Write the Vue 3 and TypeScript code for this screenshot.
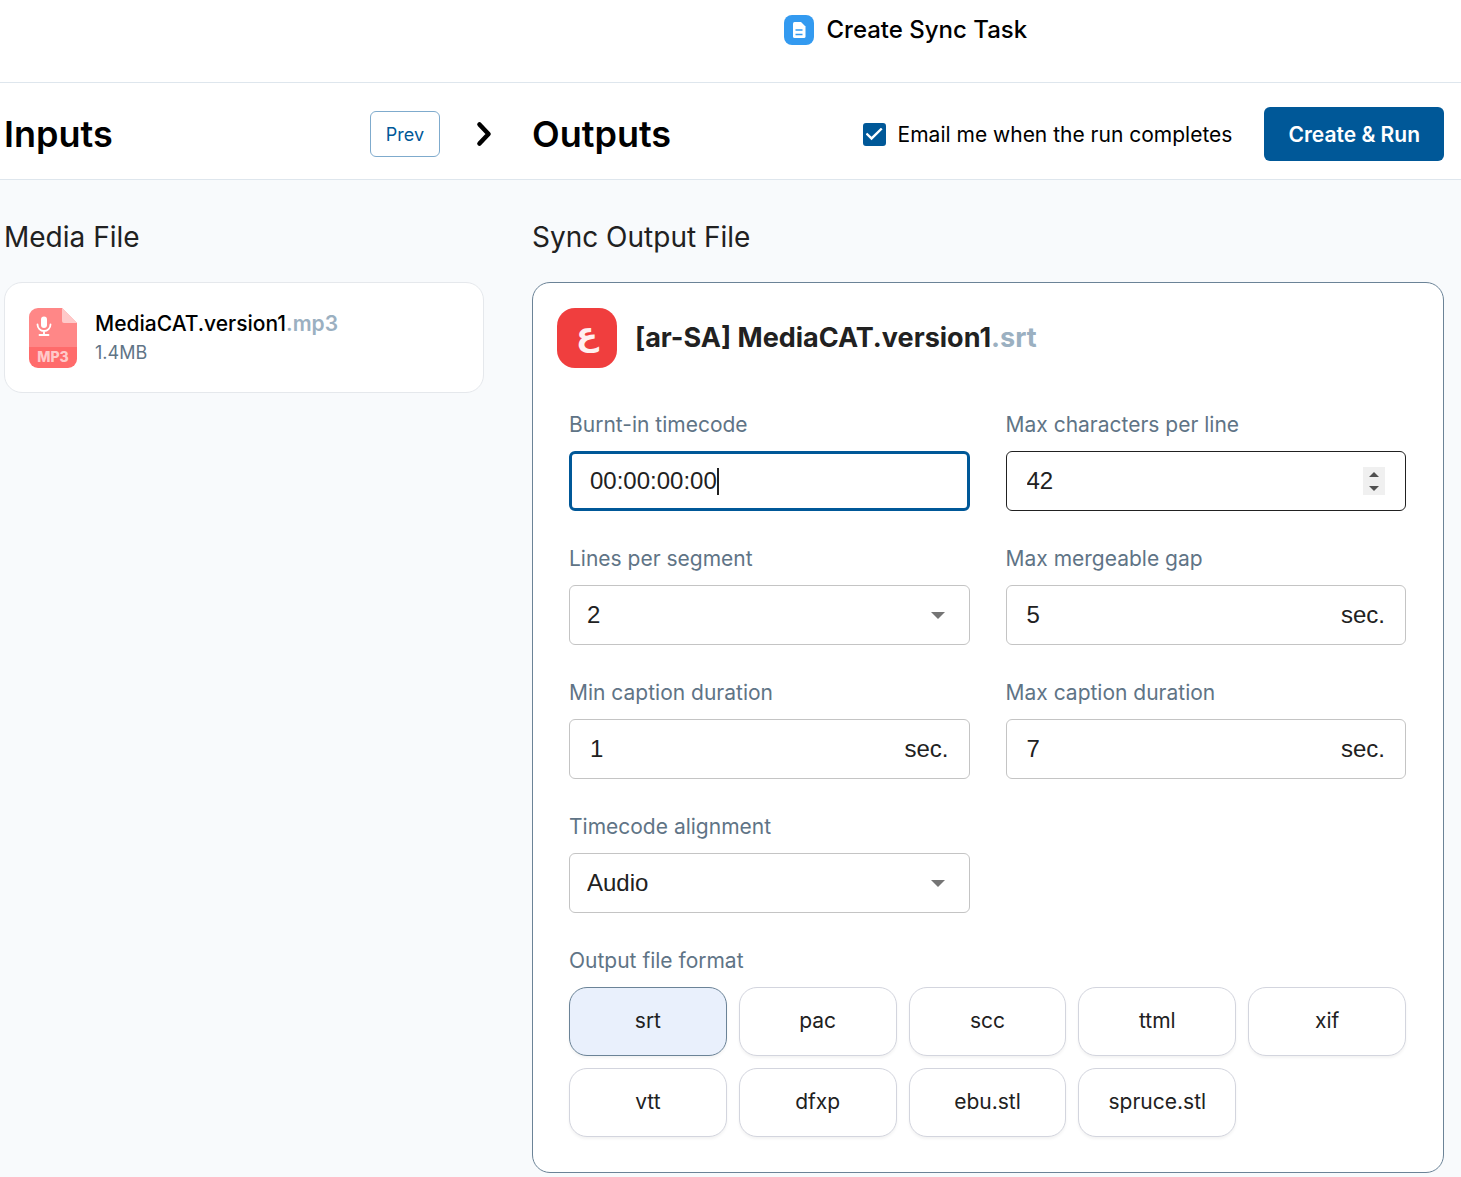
<script setup lang="ts">
import { computed, reactive, ref } from 'vue'

interface Settings {
  timecode: string
  maxChars: number
  lines: string
  mergeGap: number
  minDuration: number
  maxDuration: number
  alignment: string
}

const settings = reactive<Settings>({
  timecode: '00:00:00:00',
  maxChars: 42,
  lines: '2',
  mergeGap: 5,
  minDuration: 1,
  maxDuration: 7,
  alignment: 'Audio',
})

const emailMe = ref<boolean>(true)
const formats: string[] = ['srt', 'pac', 'scc', 'ttml', 'xif', 'vtt', 'dfxp', 'ebu.stl', 'spruce.stl']
const format = ref<string>('srt')
const outputExt = computed<string>(() => '.' + format.value)
</script>

<template>
  <div class="page">
    <header class="titlebar">
      <svg class="title-icon" viewBox="0 0 30 30" aria-hidden="true">
        <rect width="30" height="30" rx="8" fill="#339af0" />
        <path d="M10.500 7H17l4.500 4.500V21.500a1.500 1.500 0 0 1-1.500 1.500h-9.500A1.500 1.500 0 0 1 9 21.500v-13A1.500 1.500 0 0 1 10.500 7z" fill="#fff" />
        <path d="M11.500 15h7M11.500 19.500h7" stroke="#339af0" stroke-width="1.500" />
      </svg>
      <h1>Create Sync Task</h1>
    </header>

    <div class="toolbar columns">
      <div class="bar">
        <h2>Inputs</h2>
        <button type="button" class="prev">Prev</button>
      </div>
      <svg class="chevron" viewBox="0 0 16 26" aria-hidden="true">
        <path d="M3.500 3.500l9 9.500-9 9.500" fill="none" stroke="#000" stroke-width="4.600" stroke-linecap="round" stroke-linejoin="round" />
      </svg>
      <div class="bar">
        <h2>Outputs</h2>
        <div class="actions">
          <label class="email">
            <input v-model="emailMe" type="checkbox" />
            <span>Email me when the run completes</span>
          </label>
          <button type="button" class="run">Create &amp; Run</button>
        </div>
      </div>
    </div>

    <main class="columns body">
      <section>
        <h3>Media File</h3>
        <div class="media card">
          <svg class="file-icon" viewBox="0 0 48 60" aria-hidden="true">
            <path d="M9 0h24l15 15v24H0V9a9 9 0 0 1 9-9z" fill="#ff8787" />
            <path d="M33 0l15 15H35a2 2 0 0 1-2-2z" fill="#ffc9c9" />
            <path d="M0 39h48v12a9 9 0 0 1-9 9H9a9 9 0 0 1-9-9z" fill="#ff6b6b" />
            <rect x="12" y="8.500" width="6" height="11.500" rx="3" fill="#fff" />
            <path d="M8.500 16.500a6.500 6.500 0 0 0 13 0M15 23v4M10.500 27h9" fill="none" stroke="#fff" stroke-width="1.800" stroke-linecap="round" />
            <text x="24" y="54" text-anchor="middle" font-size="14" font-weight="800" fill="#ffc9c9">MP3</text>
          </svg>
          <div>
            <p class="media-name">MediaCAT.version1<span class="ext">.mp3</span></p>
            <p class="media-size">1.4MB</p>
          </div>
        </div>
      </section>

      <section class="outputs">
        <h3>Sync Output File</h3>
        <form class="output card" @submit.prevent>
          <div class="output-head">
            <span class="lang" lang="ar">ع</span>
            <h4>[ar-SA] MediaCAT.version1<span class="ext">{{ outputExt }}</span></h4>
          </div>

          <div class="fields">
            <div class="field">
              <label for="timecode">Burnt-in timecode</label>
              <div class="control focused">
                <input id="timecode" v-model="settings.timecode" class="timecode" type="text" />
                <span class="caret"></span>
              </div>
            </div>
            <div class="field">
              <label for="max-chars">Max characters per line</label>
              <div class="control hovered">
                <input id="max-chars" v-model="settings.maxChars" type="number" />
                <span class="stepper">
                  <button type="button" aria-label="Increase" @click="settings.maxChars++">
                    <svg viewBox="0 0 10 5"><path d="M0 5l5-5 5 5z" /></svg>
                  </button>
                  <button type="button" aria-label="Decrease" @click="settings.maxChars--">
                    <svg viewBox="0 0 10 5"><path d="M0 0h10L5 5z" /></svg>
                  </button>
                </span>
              </div>
            </div>
            <div class="field">
              <label for="lines">Lines per segment</label>
              <div class="control select">
                <select id="lines" v-model="settings.lines">
                  <option>1</option>
                  <option>2</option>
                  <option>3</option>
                </select>
                <svg class="arrow" viewBox="0 0 14 7" aria-hidden="true"><path d="M0 0h14L7 7z" /></svg>
              </div>
            </div>
            <div class="field">
              <label for="gap">Max mergeable gap</label>
              <div class="control">
                <input id="gap" v-model="settings.mergeGap" type="number" />
                <span>sec.</span>
              </div>
            </div>
            <div class="field">
              <label for="min-duration">Min caption duration</label>
              <div class="control">
                <input id="min-duration" v-model="settings.minDuration" type="number" />
                <span>sec.</span>
              </div>
            </div>
            <div class="field">
              <label for="max-duration">Max caption duration</label>
              <div class="control">
                <input id="max-duration" v-model="settings.maxDuration" type="number" />
                <span>sec.</span>
              </div>
            </div>
            <div class="field">
              <label for="alignment">Timecode alignment</label>
              <div class="control select">
                <select id="alignment" v-model="settings.alignment">
                  <option>Audio</option>
                  <option>Shot</option>
                </select>
                <svg class="arrow" viewBox="0 0 14 7" aria-hidden="true"><path d="M0 0h14L7 7z" /></svg>
              </div>
            </div>
            <div class="field wide" role="group" aria-labelledby="format-label">
              <span id="format-label" class="label">Output file format</span>
              <div class="formats">
                <button
                  v-for="item in formats"
                  :key="item"
                  type="button"
                  :class="{ active: item === format }"
                  :aria-pressed="item === format"
                  @click="format = item"
                >{{ item }}</button>
              </div>
            </div>
          </div>
        </form>
      </section>
    </main>
  </div>
</template>

<style>
body {
  margin: 0;
  background: #f8fafc;
}
</style>

<style scoped>
.page {
  min-height: 100vh;
  color: #212121;
  font-family: Inter, "Liberation Sans", sans-serif;
}

.page,
.page *,
.page *::before {
  box-sizing: border-box;
}

h1, h2, h3, h4, p {
  margin: 0;
}

button, input, select {
  font: inherit;
  color: inherit;
}

button {
  cursor: pointer;
}

.titlebar {
  display: flex;
  align-items: center;
  justify-content: center;
  gap: 12px;
  padding: 12px 0 34px 24%;
  background: #fff;
  border-bottom: 1px solid #dee6ed;
}

.title-icon {
  width: 30px;
  height: 30px;
}

h1 {
  color: #000;
  font-size: 24px;
  font-weight: 500;
  line-height: 36px;
}

.columns {
  display: grid;
  grid-template-columns: minmax(0, 10fr) minmax(0, 19fr);
  column-gap: 48px;
  padding: 0 17px 0 4px;
}

.toolbar {
  grid-template-columns: minmax(0, 10fr) 0 minmax(0, 19fr);
  column-gap: 24px;
  align-items: center;
  padding-top: 24px;
  padding-bottom: 18px;
  background: #fff;
  border-bottom: 1px solid #dee6ed;
}

.bar,
.actions,
.email {
  display: flex;
  align-items: center;
}

.bar {
  justify-content: space-between;
}

h2 {
  color: #000;
  font-size: 36px;
  font-weight: 600;
  line-height: 54px;
}

.prev {
  height: 46px;
  margin-right: 44px;
  padding: 0 15px;
  border: 1px solid #7fabcd;
  border-radius: 6px;
  background: #fff;
  color: #005898;
  font-size: 18px;
}

.chevron {
  width: 16px;
  height: 26px;
  justify-self: end;
  margin-right: 16px;
}

.actions {
  gap: 32px;
}

.email {
  gap: 12px;
  color: #000;
  font-size: 21px;
}

.email input {
  display: grid;
  place-items: center;
  width: 23px;
  height: 23px;
  margin: 0;
  appearance: none;
  border: 2px solid #005898;
  border-radius: 3px;
}

.email input:checked {
  background: #005898;
}

.email input:checked::before {
  content: "";
  width: 17px;
  height: 13px;
  background: #fff;
  clip-path: polygon(0 52%, 10% 40%, 35% 72%, 90% 2%, 100% 14%, 35% 98%);
}

.run {
  height: 54px;
  padding: 0 24px;
  border: 0;
  border-radius: 6px;
  background: #005898;
  color: #fff;
  font-size: 21px;
  font-weight: 600;
}

.body {
  padding-top: 36px;
  padding-bottom: 4px;
}

h3 {
  margin-bottom: 24px;
  font-size: 28px;
  font-weight: 400;
  line-height: 42px;
}

.card {
  border: 1px solid #e5e8ec;
  border-radius: 18px;
  background: #fff;
}

.media {
  display: flex;
  align-items: center;
  gap: 18px;
  padding: 25px 24px 24px;
}

.file-icon {
  flex: none;
  width: 48px;
  height: 60px;
}

.media-name {
  color: #000;
  font-size: 21px;
  font-weight: 500;
  line-height: 30px;
}

.ext {
  color: #9bb0c1;
}

.media-name .ext {
  font-weight: 600;
}

.media-size {
  color: #5f7486;
  font-size: 18px;
  line-height: 28px;
}

.output {
  padding: 25px 24px 35px;
  border-color: #6b8397;
}

.output-head {
  display: flex;
  align-items: center;
  gap: 18px;
}

.lang {
  display: grid;
  flex: none;
  place-items: center;
  width: 60px;
  height: 60px;
  padding-bottom: 8px;
  border-radius: 18px;
  background: #f03e3e;
  color: #fff0f0;
  font-family: "DejaVu Sans", sans-serif;
  font-size: 32px;
  font-weight: 700;
  line-height: 36px;
}

h4 {
  font-size: 27px;
  font-weight: 700;
  line-height: 40px;
}

.fields {
  display: grid;
  grid-template-columns: repeat(2, minmax(0, 1fr));
  gap: 32px 36px;
  padding: 41px 13px 0 12px;
}

.field {
  display: flex;
  flex-direction: column;
  gap: 10px;
}

.wide {
  grid-column: 1 / -1;
}

.field label,
.label {
  color: #5f7486;
  font-size: 21px;
  line-height: 32px;
}

.control {
  display: flex;
  align-items: center;
  height: 60px;
  padding: 0 20px;
  border: 1px solid #c4c4c4;
  border-radius: 6px;
  background: #fff;
  font-family: "Liberation Sans", Arial, sans-serif;
  font-size: 24px;
}

.control input {
  flex: 1;
  min-width: 0;
  padding: 0;
  border: 0;
  outline: 0;
  background: none;
  appearance: textfield;
}

.control input::-webkit-inner-spin-button {
  appearance: none;
}

.control.focused {
  padding: 0 18px;
  border: 3px solid #005898;
}

.control .timecode {
  flex: none;
  field-sizing: content;
  caret-color: transparent;
}

.caret {
  width: 2px;
  height: 27px;
  background: #212121;
}

.control.hovered {
  border-color: #212121;
}

.stepper {
  display: flex;
  flex-direction: column;
  width: 22px;
  height: 28px;
  background: #f0f0f0;
}

.stepper button {
  display: flex;
  flex: 1;
  align-items: center;
  justify-content: center;
  min-height: 0;
  padding: 0;
  border: 0;
  background: none;
}

.stepper svg {
  width: 10px;
  height: 5px;
  fill: #505050;
}

.control.select {
  display: grid;
  align-items: center;
  padding: 0;
}

.select select {
  grid-area: 1 / 1;
  width: 100%;
  height: 58px;
  padding: 0 48px 2px 17px;
  border: 0;
  outline: 0;
  background: none;
  appearance: none;
}

.arrow {
  grid-area: 1 / 1;
  justify-self: end;
  width: 14px;
  height: 7px;
  margin-right: 24px;
  fill: #757575;
  pointer-events: none;
}

.formats {
  display: grid;
  grid-template-columns: repeat(5, minmax(0, 1fr));
  gap: 12px;
}

.formats button {
  height: 69px;
  padding: 0 0 2px;
  border: 1px solid #d3d5de;
  border-radius: 18px;
  background: #fff;
  box-shadow: 0 2px 3px rgba(0, 0, 0, 0.05);
  font-size: 21px;
}

.formats .active {
  border-color: #6b8397;
  background: #e9f0fc;
}
</style>
